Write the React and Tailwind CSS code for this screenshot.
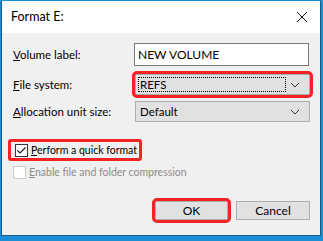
import React from "react";

const Chevron = () => (
  <svg width="10" height="6" viewBox="0 0 10 6" className="text-[#333]">
    <path d="M1 1 L5 5 L9 1" fill="none" stroke="currentColor" strokeWidth="1" />
  </svg>
);

const Combo = ({ value, focus }) => (
  <div className="w-[175px] h-[21px] bg-[#e1e1e1] border border-[#adadad] flex items-center pl-[2px] pr-[5px]">
    <div
      className={`flex-1 h-[15px] flex items-center pl-[1px] ${
        focus ? "border border-dotted border-black" : "border border-transparent"
      }`}
    >
      {value}
    </div>
    <div className="w-[18px] flex justify-center">
      <Chevron />
    </div>
  </div>
);

const App = () => {
  return (
    <div
      className="w-[323px] h-[241px] bg-[#1b8ed6] pt-[1px] pl-[1px] overflow-hidden text-[11.5px] text-black leading-none whitespace-nowrap"
      style={{ fontFamily: 'Lato, "Liberation Sans", sans-serif' }}
    >
      <div className="w-[320px] h-[235px] border-x border-b border-[#1c5a82] bg-[#f0f0f0] flex flex-col">
        {/* title bar */}
        <div className="h-[32px] bg-white flex items-center justify-between pl-[9px] pr-[12px]">
          <span className="text-[12.5px]">Format E:</span>
          <svg width="12" height="12" viewBox="0 0 12 12">
            <path d="M1 1 L11 11 M11 1 L1 11" stroke="#111" strokeWidth="1" />
          </svg>
        </div>

        <div className="flex flex-col pl-[11px] pt-[10px]">
          <div className="flex items-center h-[23px]">
            <span className="w-[121px]">
              <u>V</u>olume label:
            </span>
            <div className="w-[175px] h-[23px] bg-white border border-[#7a7a7a] flex items-center pl-[3px] text-[12px]">
              NEW VOLUME
            </div>
          </div>

          <div className="flex items-center h-[21px] mt-[8px]">
            <span className="w-[122px]">
              <u>F</u>ile system:
            </span>
            <div className="rounded-[2px] outline-[3px] outline-solid outline-[#f42424]">
              <Combo value="REFS" focus />
            </div>
          </div>

          <div className="flex items-center h-[21px] mt-[6px]">
            <span className="w-[122px]">
              <u>A</u>llocation unit size:
            </span>
            <Combo value="Default" />
          </div>

          <div className="mt-[17px] ml-[-5px] w-[134px] h-[22px] flex items-center pl-[4px] border-[3px] border-[#f42424] rounded-[3px] text-[10.5px]">
            <div className="w-[13px] h-[13px] border border-[#333] bg-white flex items-center justify-center">
              <svg width="11" height="11" viewBox="0 0 11 11">
                <path d="M1.5 5.5 L4 8 L9.5 2.5" fill="none" stroke="#222" strokeWidth="1.2" />
              </svg>
            </div>
            <span className="ml-[3px]">
              <u>P</u>erform a quick format
            </span>
          </div>

          <div className="mt-[4px] h-[14px] flex items-center text-[#8c8c8c] text-[10.5px]">
            <div className="w-[13px] h-[13px] border border-[#cccccc] bg-white" />
            <span className="ml-[3px]">
              <u>E</u>nable file and folder compression
            </span>
          </div>

          <div className="mt-[22px] flex justify-end pr-[10px] gap-[8px] text-[12px]">
            <div className="rounded-[2px] outline-[3px] outline-solid outline-[#f42424]">
              <div className="w-[73px] h-[19px] bg-[#e1e1e1] border border-[#adadad] flex items-center justify-center">
                OK
              </div>
            </div>
            <div className="w-[74px] h-[19px] bg-[#e1e1e1] border border-[#adadad] flex items-center justify-center">
              Cancel
            </div>
          </div>
        </div>
      </div>
    </div>
  );
};

export default App;
